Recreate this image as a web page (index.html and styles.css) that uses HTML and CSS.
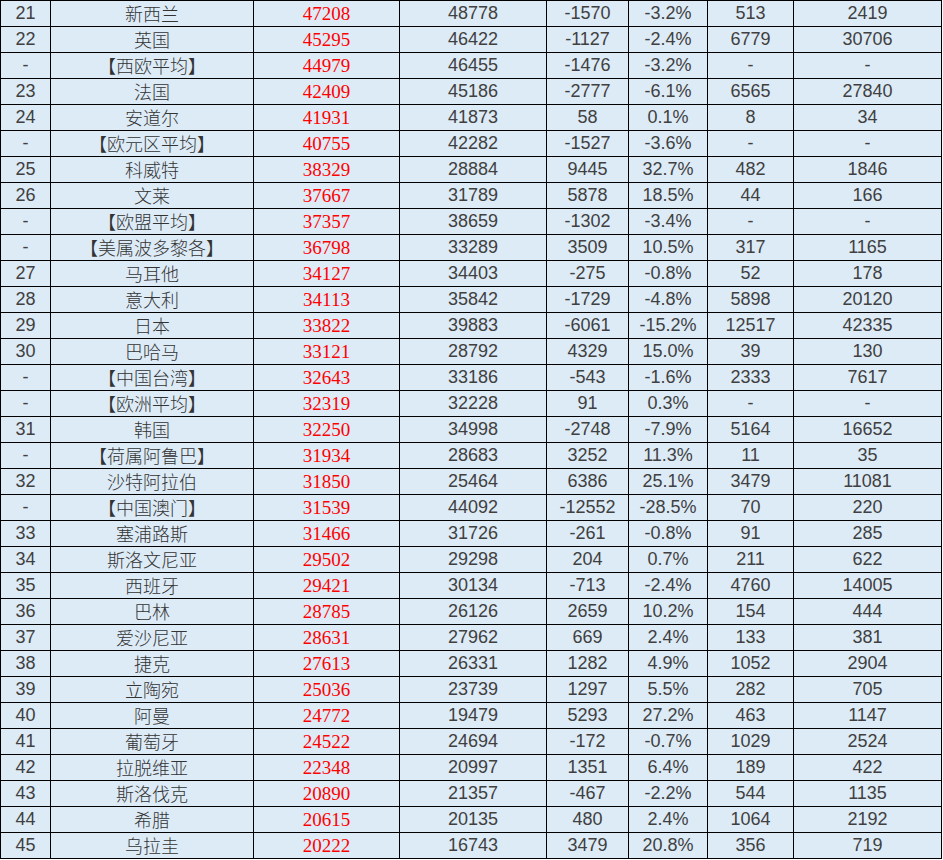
FILE: index.html
```html
<!DOCTYPE html>
<html lang="zh">
<head>
<meta charset="utf-8">
<title>GDP</title>
<link rel="stylesheet" href="styles.css">
</head>
<body>
<table class="grid">
<colgroup>
<col class="c1"><col class="c2"><col class="c3"><col class="c4"><col class="c5"><col class="c6"><col class="c7"><col class="c8">
</colgroup>
<tbody id="rows">
<tr><td>21</td><td class="name">新西兰</td><td class="red">47208</td><td>48778</td><td>-1570</td><td>-3.2%</td><td>513</td><td>2419</td></tr>
<tr><td>22</td><td class="name">英国</td><td class="red">45295</td><td>46422</td><td>-1127</td><td>-2.4%</td><td>6779</td><td>30706</td></tr>
<tr><td>-</td><td class="name">【西欧平均】</td><td class="red">44979</td><td>46455</td><td>-1476</td><td>-3.2%</td><td>-</td><td>-</td></tr>
<tr><td>23</td><td class="name">法国</td><td class="red">42409</td><td>45186</td><td>-2777</td><td>-6.1%</td><td>6565</td><td>27840</td></tr>
<tr><td>24</td><td class="name">安道尔</td><td class="red">41931</td><td>41873</td><td>58</td><td>0.1%</td><td>8</td><td>34</td></tr>
<tr><td>-</td><td class="name">【欧元区平均】</td><td class="red">40755</td><td>42282</td><td>-1527</td><td>-3.6%</td><td>-</td><td>-</td></tr>
<tr><td>25</td><td class="name">科威特</td><td class="red">38329</td><td>28884</td><td>9445</td><td>32.7%</td><td>482</td><td>1846</td></tr>
<tr><td>26</td><td class="name">文莱</td><td class="red">37667</td><td>31789</td><td>5878</td><td>18.5%</td><td>44</td><td>166</td></tr>
<tr><td>-</td><td class="name">【欧盟平均】</td><td class="red">37357</td><td>38659</td><td>-1302</td><td>-3.4%</td><td>-</td><td>-</td></tr>
<tr><td>-</td><td class="name">【美属波多黎各】</td><td class="red">36798</td><td>33289</td><td>3509</td><td>10.5%</td><td>317</td><td>1165</td></tr>
<tr><td>27</td><td class="name">马耳他</td><td class="red">34127</td><td>34403</td><td>-275</td><td>-0.8%</td><td>52</td><td>178</td></tr>
<tr><td>28</td><td class="name">意大利</td><td class="red">34113</td><td>35842</td><td>-1729</td><td>-4.8%</td><td>5898</td><td>20120</td></tr>
<tr><td>29</td><td class="name">日本</td><td class="red">33822</td><td>39883</td><td>-6061</td><td>-15.2%</td><td>12517</td><td>42335</td></tr>
<tr><td>30</td><td class="name">巴哈马</td><td class="red">33121</td><td>28792</td><td>4329</td><td>15.0%</td><td>39</td><td>130</td></tr>
<tr><td>-</td><td class="name">【中国台湾】</td><td class="red">32643</td><td>33186</td><td>-543</td><td>-1.6%</td><td>2333</td><td>7617</td></tr>
<tr><td>-</td><td class="name">【欧洲平均】</td><td class="red">32319</td><td>32228</td><td>91</td><td>0.3%</td><td>-</td><td>-</td></tr>
<tr><td>31</td><td class="name">韩国</td><td class="red">32250</td><td>34998</td><td>-2748</td><td>-7.9%</td><td>5164</td><td>16652</td></tr>
<tr><td>-</td><td class="name">【荷属阿鲁巴】</td><td class="red">31934</td><td>28683</td><td>3252</td><td>11.3%</td><td>11</td><td>35</td></tr>
<tr><td>32</td><td class="name">沙特阿拉伯</td><td class="red">31850</td><td>25464</td><td>6386</td><td>25.1%</td><td>3479</td><td>11081</td></tr>
<tr><td>-</td><td class="name">【中国澳门】</td><td class="red">31539</td><td>44092</td><td>-12552</td><td>-28.5%</td><td>70</td><td>220</td></tr>
<tr><td>33</td><td class="name">塞浦路斯</td><td class="red">31466</td><td>31726</td><td>-261</td><td>-0.8%</td><td>91</td><td>285</td></tr>
<tr><td>34</td><td class="name">斯洛文尼亚</td><td class="red">29502</td><td>29298</td><td>204</td><td>0.7%</td><td>211</td><td>622</td></tr>
<tr><td>35</td><td class="name">西班牙</td><td class="red">29421</td><td>30134</td><td>-713</td><td>-2.4%</td><td>4760</td><td>14005</td></tr>
<tr><td>36</td><td class="name">巴林</td><td class="red">28785</td><td>26126</td><td>2659</td><td>10.2%</td><td>154</td><td>444</td></tr>
<tr><td>37</td><td class="name">爱沙尼亚</td><td class="red">28631</td><td>27962</td><td>669</td><td>2.4%</td><td>133</td><td>381</td></tr>
<tr><td>38</td><td class="name">捷克</td><td class="red">27613</td><td>26331</td><td>1282</td><td>4.9%</td><td>1052</td><td>2904</td></tr>
<tr><td>39</td><td class="name">立陶宛</td><td class="red">25036</td><td>23739</td><td>1297</td><td>5.5%</td><td>282</td><td>705</td></tr>
<tr><td>40</td><td class="name">阿曼</td><td class="red">24772</td><td>19479</td><td>5293</td><td>27.2%</td><td>463</td><td>1147</td></tr>
<tr><td>41</td><td class="name">葡萄牙</td><td class="red">24522</td><td>24694</td><td>-172</td><td>-0.7%</td><td>1029</td><td>2524</td></tr>
<tr><td>42</td><td class="name">拉脱维亚</td><td class="red">22348</td><td>20997</td><td>1351</td><td>6.4%</td><td>189</td><td>422</td></tr>
<tr><td>43</td><td class="name">斯洛伐克</td><td class="red">20890</td><td>21357</td><td>-467</td><td>-2.2%</td><td>544</td><td>1135</td></tr>
<tr><td>44</td><td class="name">希腊</td><td class="red">20615</td><td>20135</td><td>480</td><td>2.4%</td><td>1064</td><td>2192</td></tr>
<tr><td>45</td><td class="name">乌拉圭</td><td class="red">20222</td><td>16743</td><td>3479</td><td>20.8%</td><td>356</td><td>719</td></tr>
</tbody>
</table>
</body>
</html>
```

FILE: styles.css
```css
html, body {
  margin: 0;
  padding: 0;
  background: #ffffff;
}

.grid {
  border-collapse: collapse;
  table-layout: fixed;
  width: 941px;
  background: #ddebf7;
  font-family: "Liberation Sans", "Noto Sans CJK SC", sans-serif;
  font-size: 18px;
  color: #404040;
}

.c1 { width: 50px; }
.c2 { width: 203px; }
.c3 { width: 146px; }
.c4 { width: 147px; }
.c5 { width: 82px; }
.c6 { width: 79px; }
.c7 { width: 86px; }
.c8 { width: 148px; }

.grid td {
  border: 1px solid #000000;
  height: 25px;
  padding: 0;
  text-align: center;
  vertical-align: middle;
  line-height: 25px;
  white-space: nowrap;
  overflow: hidden;
}

.grid td.name {
  font-family: "Noto Sans CJK SC", sans-serif;
  font-weight: 300;
  font-size: 18px;
  color: #333333;
}

.grid td.red {
  font-family: "Liberation Serif", serif;
  font-size: 19px;
  color: #ff0000;
}
```
